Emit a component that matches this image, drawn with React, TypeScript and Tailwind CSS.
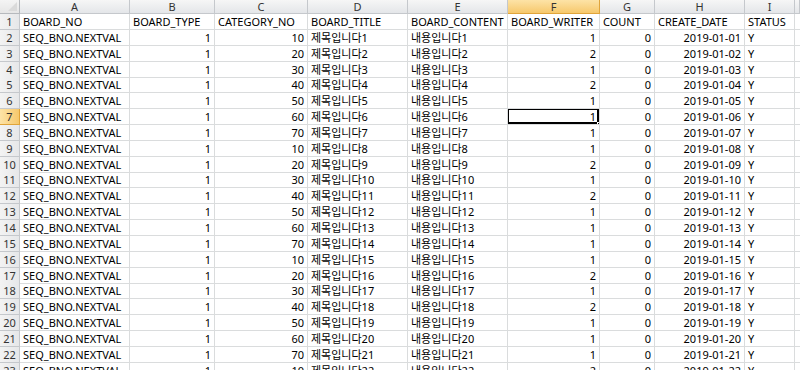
const COLS = ['A', 'B', 'C', 'D', 'E', 'F', 'G', 'H', 'I', '']
const GRID = 'grid grid-cols-[20px_110px_85px_93px_100px_100px_92px_55px_90px_50px_1fr]'
const HEADERS = ['BOARD_NO', 'BOARD_TYPE', 'CATEGORY_NO', 'BOARD_TITLE', 'BOARD_CONTENT', 'BOARD_WRITER', 'COUNT', 'CREATE_DATE', 'STATUS']
const WRITERS = [1, 2, 1, 2, 1, 1, 1, 1, 2, 1, 2, 1, 1, 1, 1, 2, 1, 2, 1, 1, 1, 2]

const rows = WRITERS.map((w, i) => ({
  no: 'SEQ_BNO.NEXTVAL',
  type: 1,
  category: ((i % 7) + 1) * 10,
  title: `제목입니다${i + 1}`,
  content: `내용입니다${i + 1}`,
  writer: w,
  count: 0,
  date: `2019-01-${String(i + 1).padStart(2, '0')}`,
  status: 'Y',
}))

const cell = 'border-r border-b border-[#dadcdd] px-[3px] overflow-hidden whitespace-nowrap leading-[15px]'
const num = `${cell} text-right`

export default function App() {
  return (
    <div className="w-[800px] h-[370px] overflow-hidden bg-white text-[11px] text-black" style={{ fontFamily: '"Noto Sans", "Noto Sans CJK KR", sans-serif' }}>
      {/* column headers */}
      <div className={`${GRID} h-[14px]`}>
        <div className="relative border-r border-b border-[#b6b9bd] bg-gradient-to-b from-[#f4f4f4] to-[#e6e6e6]">
          <div className="absolute right-[2px] bottom-[2px] w-0 h-0 border-l-[9px] border-l-transparent border-b-[9px] border-b-[#dadada]" />
        </div>
        {COLS.map((c, i) => (
          <div
            key={i}
            className={`border-r border-b text-center leading-[13px] text-[#333] ${c === 'F' ? 'border-[#e0a43a] bg-gradient-to-b from-[#fde3a6] to-[#f6c86b]' : 'border-[#c5c8cc] bg-gradient-to-b from-[#f6f6f6] to-[#e4e6e9]'}`}
          >
            {c}
          </div>
        ))}
      </div>

      {/* header row */}
      <div className={`${GRID} h-[15.85px]`}>
        <div className="border-r border-b border-[#c5c8cc] bg-gradient-to-r from-[#f3f3f3] to-[#e6e7e9] text-center leading-[15px] text-[#333]">1</div>
        {HEADERS.map(h => (
          <div key={h} className={cell}>{h}</div>
        ))}
        <div className={cell} />
      </div>

      {rows.map((r, i) => {
        const n = i + 2
        const sel = n === 7
        return (
          <div key={n} className={`${GRID} h-[15.85px]`}>
            <div className={`border-r border-b text-center leading-[15px] text-[#333] ${sel ? 'border-[#e0a43a] bg-gradient-to-r from-[#fde3a6] to-[#f6c86b]' : 'border-[#c5c8cc] bg-gradient-to-r from-[#f3f3f3] to-[#e6e7e9]'}`}>
              {n}
            </div>
            <div className={cell}>{r.no}</div>
            <div className={num}>{r.type}</div>
            <div className={num}>{r.category}</div>
            <div className={cell}>{r.title}</div>
            <div className={cell}>{r.content}</div>
            <div className={`${num} relative`}>
              {r.writer}
              {sel && (
                <>
                  <div className="absolute -left-[1px] -top-[1px] -right-0 -bottom-0 border-2 border-black" />
                  <div className="absolute -right-[3px] -bottom-[3px] w-[5px] h-[5px] bg-black border border-white" />
                </>
              )}
            </div>
            <div className={num}>{r.count}</div>
            <div className={num}>{r.date}</div>
            <div className={cell}>{r.status}</div>
            <div className={cell} />
          </div>
        )
      })}
    </div>
  )
}
